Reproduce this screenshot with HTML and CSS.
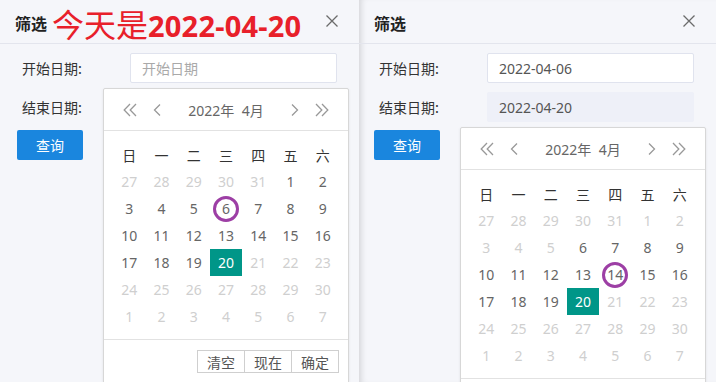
FILE: index.html
```html
<html>
<head>
    <title>筛选</title>
    <meta charset="utf-8">
    <link rel="stylesheet" href="styles.css">
</head>
<body>
    <div class="page">
        <section class="panel panel-left">
            <header class="panel-head">
                <span class="panel-title">筛选</span>
                <span class="today">今天是<b>2022-04-20</b></span>
                <span class="close">
                    <svg width="12" height="12" viewBox="0 0 12 12"><path d="M0.5 0.5 L11.5 11.5 M11.5 0.5 L0.5 11.5"/></svg>
                </span>
            </header>
            <div class="panel-body">
                <div class="field">
                    <label>开始日期:</label>
                    <div class="input-wrap">
                        <input class="date-input" type="text" placeholder="开始日期">
                        <div class="calendar">
                            <div class="cal-nav">
                                <svg class="ico-dbl" width="14" height="14" viewBox="0 0 14 14"><path d="M7 1 L1.2 7 L7 13 M13 1 L7.2 7 L13 13"/></svg>
                                <svg class="ico-one" width="8" height="14" viewBox="0 0 8 14"><path d="M7 1.5 L1.5 7 L7 12.5"/></svg>
                                <span class="cal-title">2022年&nbsp; 4月</span>
                                <svg class="ico-one" width="8" height="14" viewBox="0 0 8 14"><path d="M1 1.5 L6.5 7 L1 12.5"/></svg>
                                <svg class="ico-dbl" width="14" height="14" viewBox="0 0 14 14"><path d="M1 1 L6.8 7 L1 13 M7 1 L12.8 7 L7 13"/></svg>
                            </div>
                            <div class="cal-grid">
                                <span class="wd">日</span><span class="wd">一</span><span class="wd">二</span><span class="wd">三</span><span class="wd">四</span><span class="wd">五</span><span class="wd">六</span>
                                <span class="off">27</span><span class="off">28</span><span class="off">29</span><span class="off">30</span><span class="off">31</span><span>1</span><span>2</span>
                                <span>3</span><span>4</span><span>5</span><span class="mark">6</span><span>7</span><span>8</span><span>9</span>
                                <span>10</span><span>11</span><span>12</span><span>13</span><span>14</span><span>15</span><span>16</span>
                                <span>17</span><span>18</span><span>19</span><span class="sel">20</span><span class="off">21</span><span class="off">22</span><span class="off">23</span>
                                <span class="off">24</span><span class="off">25</span><span class="off">26</span><span class="off">27</span><span class="off">28</span><span class="off">29</span><span class="off">30</span>
                                <span class="off">1</span><span class="off">2</span><span class="off">3</span><span class="off">4</span><span class="off">5</span><span class="off">6</span><span class="off">7</span>
                            </div>
                            <div class="cal-foot">
                                <span class="cal-btn">清空</span><span class="cal-btn">现在</span><span class="cal-btn">确定</span>
                            </div>
                        </div>
                    </div>
                </div>
                <div class="field">
                    <label>结束日期:</label>
                    <div class="input-wrap">
                        <input class="date-input" type="text" placeholder="结束日期">
                    </div>
                </div>
                <button class="btn-query">查询</button>
            </div>
        </section>

        <section class="panel panel-right">
            <header class="panel-head">
                <span class="panel-title">筛选</span>
                <span class="close">
                    <svg width="12" height="12" viewBox="0 0 12 12"><path d="M0.5 0.5 L11.5 11.5 M11.5 0.5 L0.5 11.5"/></svg>
                </span>
            </header>
            <div class="panel-body">
                <div class="field">
                    <label>开始日期:</label>
                    <div class="input-wrap">
                        <input class="date-input" type="text" value="2022-04-06">
                    </div>
                </div>
                <div class="field">
                    <label>结束日期:</label>
                    <div class="input-wrap">
                        <input class="date-input active" type="text" value="2022-04-20">
                        <div class="calendar">
                            <div class="cal-nav">
                                <svg class="ico-dbl" width="14" height="14" viewBox="0 0 14 14"><path d="M7 1 L1.2 7 L7 13 M13 1 L7.2 7 L13 13"/></svg>
                                <svg class="ico-one" width="8" height="14" viewBox="0 0 8 14"><path d="M7 1.5 L1.5 7 L7 12.5"/></svg>
                                <span class="cal-title">2022年&nbsp; 4月</span>
                                <svg class="ico-one" width="8" height="14" viewBox="0 0 8 14"><path d="M1 1.5 L6.5 7 L1 12.5"/></svg>
                                <svg class="ico-dbl" width="14" height="14" viewBox="0 0 14 14"><path d="M1 1 L6.8 7 L1 13 M7 1 L12.8 7 L7 13"/></svg>
                            </div>
                            <div class="cal-grid">
                                <span class="wd">日</span><span class="wd">一</span><span class="wd">二</span><span class="wd">三</span><span class="wd">四</span><span class="wd">五</span><span class="wd">六</span>
                                <span class="off">27</span><span class="off">28</span><span class="off">29</span><span class="off">30</span><span class="off">31</span><span class="off">1</span><span class="off">2</span>
                                <span class="off">3</span><span class="off">4</span><span class="off">5</span><span>6</span><span>7</span><span>8</span><span>9</span>
                                <span>10</span><span>11</span><span>12</span><span>13</span><span class="mark">14</span><span>15</span><span>16</span>
                                <span>17</span><span>18</span><span>19</span><span class="sel">20</span><span class="off">21</span><span class="off">22</span><span class="off">23</span>
                                <span class="off">24</span><span class="off">25</span><span class="off">26</span><span class="off">27</span><span class="off">28</span><span class="off">29</span><span class="off">30</span>
                                <span class="off">1</span><span class="off">2</span><span class="off">3</span><span class="off">4</span><span class="off">5</span><span class="off">6</span><span class="off">7</span>
                            </div>
                            <div class="cal-foot">
                                <span class="cal-btn">清空</span><span class="cal-btn">现在</span><span class="cal-btn">确定</span>
                            </div>
                        </div>
                    </div>
                </div>
                <button class="btn-query">查询</button>
            </div>
        </section>
    </div>
</body>
</html>
```

FILE: styles.css
```css
html, body {
    margin: 0;
    padding: 0;
    height: 100%;
    overflow: hidden;
}

body {
    font-family: "Noto Sans", "Noto Sans CJK SC", sans-serif;
    font-size: 14px;
    color: #333;
    background-color: #f5f6fa;
}

.page {
    display: flex;
    height: 100%;
}

.panel {
    position: relative;
    height: 100%;
    overflow: hidden;
    background-color: #f5f6fa;
}

.panel-left {
    width: 359px;
}

.panel-right {
    flex: 1;
    box-shadow: inset 6px 0 6px -4px rgba(0, 0, 0, 0.14);
}

.panel-head {
    display: flex;
    align-items: center;
    height: 44px;
    padding: 3px 21px 0 15px;
    box-sizing: border-box;
    border-bottom: 1px solid #e3e5ed;
}

.panel-title {
    font-family: "Noto Sans CJK SC", sans-serif;
    font-size: 16px;
    font-weight: bold;
    color: #222;
}

.today {
    margin-left: 5px;
    font-family: "Noto Sans CJK SC", sans-serif;
    font-size: 32px;
    color: #e8202a;
    line-height: 1;
}

.today b {
    font-family: "Noto Sans", sans-serif;
    font-size: 29px;
    font-weight: bold;
    letter-spacing: 0.2px;
}

.close {
    margin-left: auto;
    margin-bottom: 4px;
    display: flex;
}

.close svg path {
    stroke: #6b6b6b;
    stroke-width: 1.3;
    fill: none;
}

.panel-body {
    padding: 9px 17px 0;
}

.panel-right .panel-body {
    padding-left: 15px;
}

.field {
    display: flex;
    align-items: center;
    height: 30px;
    margin-bottom: 9px;
}

.field label {
    width: 108px;
    padding-left: 5px;
    color: #333;
    font-family: "Noto Sans CJK SC", sans-serif;
}

.input-wrap {
    position: relative;
}

.date-input {
    width: 207px;
    height: 30px;
    box-sizing: border-box;
    padding: 0 11px;
    border: 1px solid #e0e3ee;
    border-radius: 2px;
    background-color: #fff;
    font-family: "Noto Sans", "Noto Sans CJK SC", sans-serif;
    font-size: 14px;
    color: #555;
    outline: none;
}

.date-input::placeholder {
    color: #a9a9a9;
}

.date-input.active {
    background-color: #eef0f8;
    border-color: #eef0f8;
}

.btn-query {
    width: 66px;
    height: 30px;
    margin-top: -1px;
    border: 0;
    border-radius: 2px;
    background-color: #1a86de;
    color: #fff;
    font-family: "Noto Sans CJK SC", sans-serif;
    font-size: 14px;
}

/* date picker popup */
.calendar {
    position: absolute;
    top: 35px;
    left: -27px;
    z-index: 5;
    width: 246px;
    box-sizing: border-box;
    background-color: #fff;
    border: 1px solid #d7d7d7;
    border-radius: 2px;
    box-shadow: 0 1px 3px rgba(0, 0, 0, 0.08);
}

.cal-nav {
    display: flex;
    align-items: center;
    height: 41px;
    padding: 0 19px;
    border-bottom: 1px solid #e2e2e2;
}

.cal-nav svg path {
    stroke: #999;
    stroke-width: 1.3;
    fill: none;
}

.cal-nav .ico-one {
    margin-left: 16px;
}

.cal-nav .cal-title + .ico-one {
    margin-left: 0;
    margin-right: 16px;
}

.cal-title {
    flex: 1;
    text-align: center;
    color: #666;
}

.cal-grid {
    display: grid;
    grid-template-columns: repeat(7, 1fr);
    grid-auto-rows: 27px;
    padding: 10px 9px 9px;
}

.cal-grid span {
    position: relative;
    display: flex;
    align-items: center;
    justify-content: center;
    color: #666;
}

.cal-grid .wd {
    color: #333;
    font-family: "Noto Sans CJK SC", sans-serif;
}

.cal-grid .off {
    color: #cfcfcf;
}

.cal-grid .sel {
    background-color: #009688;
    color: #fff;
}

.cal-grid .mark::after {
    content: "";
    position: absolute;
    left: 50%;
    top: 50%;
    width: 20px;
    height: 20px;
    margin: -13px 0 0 -13px;
    border: 3px solid #9d3fa5;
    border-radius: 50%;
}

.cal-foot {
    display: flex;
    justify-content: flex-end;
    padding: 10px 9px 10px;
    border-top: 1px solid #e2e2e2;
}

.cal-btn {
    width: 48px;
    height: 23px;
    box-sizing: border-box;
    border: 1px solid #cfcfcf;
    margin-left: -1px;
    display: flex;
    align-items: center;
    justify-content: center;
    color: #555;
    font-family: "Noto Sans CJK SC", sans-serif;
}
```
